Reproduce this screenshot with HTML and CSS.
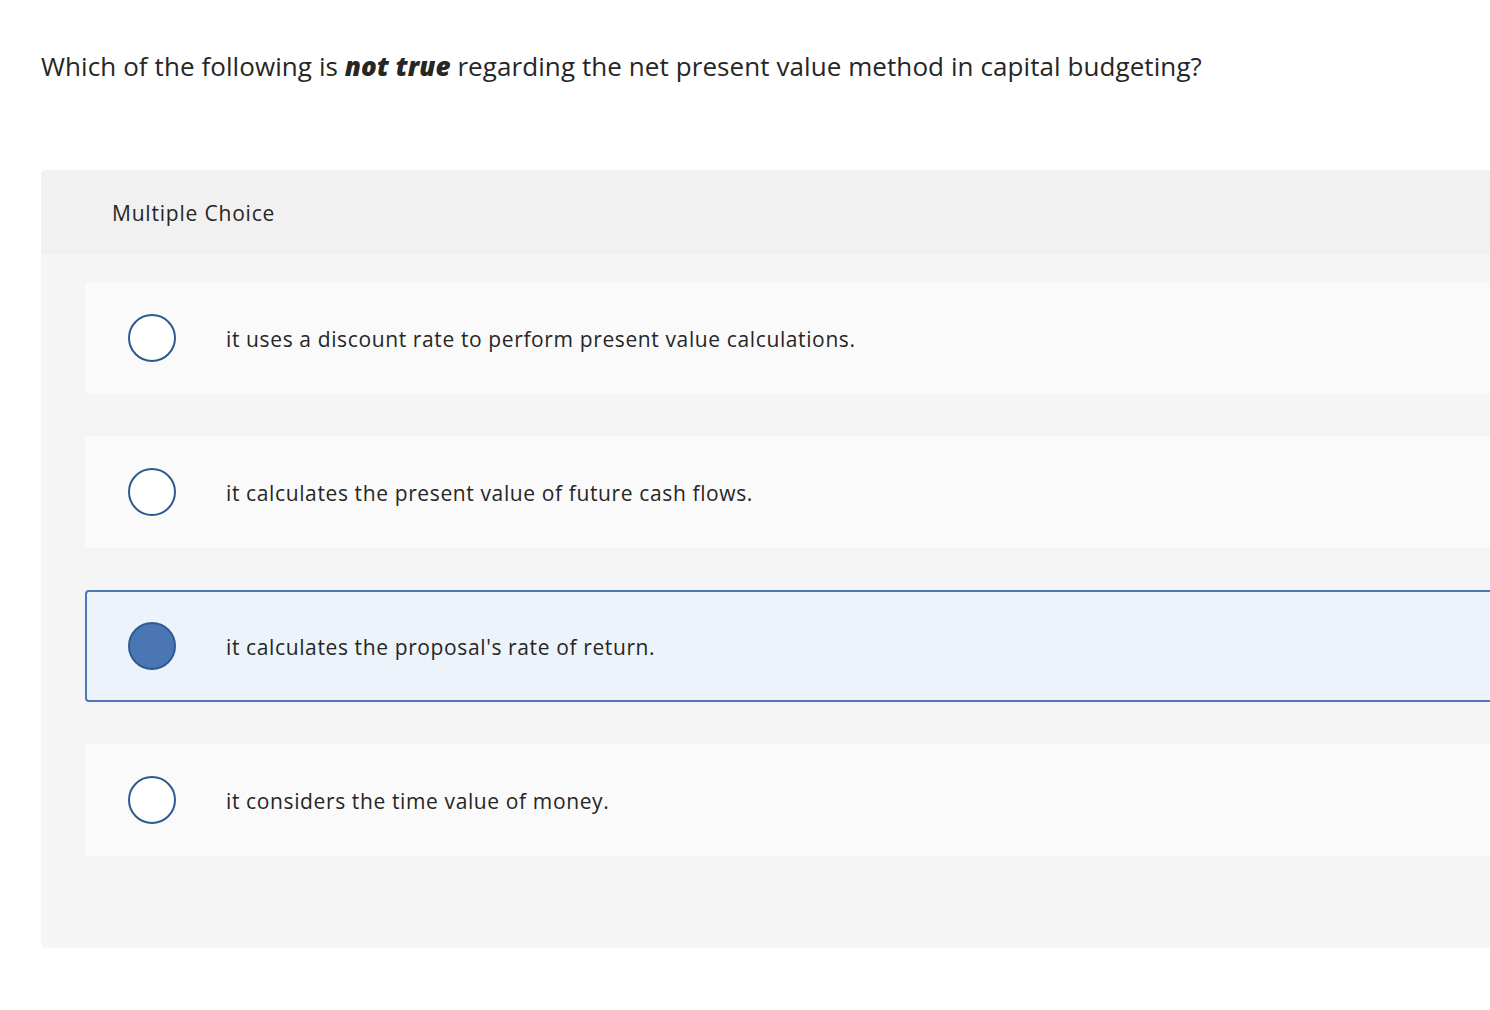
FILE: index.html
```html
<!DOCTYPE html>
<html lang="en">
<head>
    <meta charset="UTF-8">
    <meta name="viewport" content="width=device-width, initial-scale=1.0">
    <title>Multiple Choice</title>
    <link rel="stylesheet" href="styles.css">
</head>
<body>

    <div class="question">
        <p class="prompt">Which of the following is <strong><em>not true</em></strong> regarding the net present value method in capital budgeting?</p>

        <div class="panel">
            <div class="panel-header">Multiple Choice</div>

            <div class="choices">
                <label class="choice">
                    <span class="radio"></span>
                    <span class="choice-text">it uses a discount rate to perform present value calculations.</span>
                </label>

                <label class="choice">
                    <span class="radio"></span>
                    <span class="choice-text">it calculates the present value of future cash flows.</span>
                </label>

                <label class="choice selected">
                    <span class="radio"></span>
                    <span class="choice-text">it calculates the proposal's rate of return.</span>
                </label>

                <label class="choice">
                    <span class="radio"></span>
                    <span class="choice-text">it considers the time value of money.</span>
                </label>
            </div>
        </div>
    </div>

</body>
</html>
```

FILE: styles.css
```css
body {
    margin: 0;
    font-family: "Open Sans", Lato, Arial, sans-serif;
    color: #262626;
    background-color: white;
    overflow: hidden;
}

.question {
    padding: 0 0 0 41px;
}

.prompt {
    margin: 0;
    padding-top: 50px;
    height: 120px;
    font-size: 26px;
    line-height: 32px;
    letter-spacing: 0.08px;
}

.prompt strong {
    font-weight: 800;
}

.panel {
    width: 1600px;
    border-radius: 5px;
    overflow: hidden;
    background-color: #f5f5f5;
}

.panel-header {
    height: 84px;
    display: flex;
    align-items: center;
    padding: 2px 0 0 71px;
    box-sizing: border-box;
    background-color: #f1f1f1;
    font-size: 21px;
    letter-spacing: 0.8px;
}

.choices {
    display: flex;
    flex-direction: column;
    gap: 42px;
    padding: 28px 0 92px 44px;
}

.choice {
    display: flex;
    align-items: center;
    height: 108px;
    padding-left: 41px;
    background-color: #fafafa;
    border: 2px solid #fafafa;
    border-radius: 4px;
    cursor: pointer;
}

.radio {
    width: 44px;
    height: 44px;
    border: 2px solid #2d5a8e;
    border-radius: 50%;
    background-color: white;
    flex-shrink: 0;
}

.choice-text {
    margin-left: 50px;
    padding-top: 2px;
    font-size: 21px;
    letter-spacing: 0.62px;
}

.selected {
    background-color: #ecf3fb;
    border-color: #4a78b8;
}

.selected .radio {
    background-color: #4a76b4;
    border-color: #2f5b92;
}
```
